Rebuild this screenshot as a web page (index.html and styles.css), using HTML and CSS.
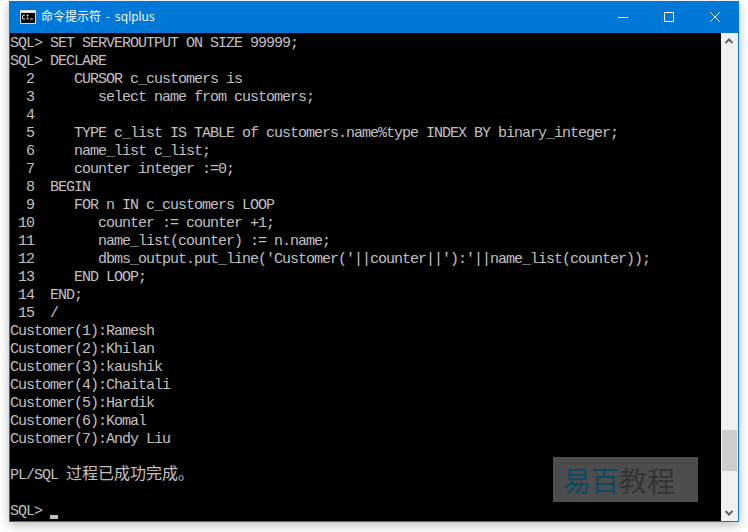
FILE: index.html
```html
<!DOCTYPE html>
<html lang="zh">
<head>
<meta charset="utf-8">
<title>命令提示符 - sqlplus</title>
<link rel="stylesheet" href="styles.css">
</head>
<body>
<div class="window">
  <header class="titlebar">
    <svg class="app-icon" width="16" height="14" viewBox="0 0 16 14">
      <rect x="0" y="0" width="16" height="14" fill="#d8d8d8"/>
      <rect x="1" y="3" width="14" height="10" fill="#000"/>
      <rect x="1" y="1" width="14" height="1" fill="#fff"/>
      <path d="M5 5H3v1.000H2.500v2H3v1h2M7 5h1v1H7zM7 8h1v1H7zM10 9h3" fill="none" stroke="#ddd" stroke-width="1"/>
    </svg>
    <span class="title">命令提示符 - sqlplus</span>
    <div class="controls">
      <span class="ctl"><svg width="10" height="10" viewBox="0 0 10 10"><path d="M0 5.500H10" stroke="#fff" fill="none"/></svg></span>
      <span class="ctl"><svg width="10" height="10" viewBox="0 0 10 10"><rect x=".5" y=".5" width="9" height="9" stroke="#fff" fill="none"/></svg></span>
      <span class="ctl"><svg width="10" height="10" viewBox="0 0 10 10"><path d="M0 0L10 10M10 0L0 10" stroke="#fff" fill="none"/></svg></span>
    </div>
  </header>
  <div class="body">
    <pre class="console">SQL&gt; SET SERVEROUTPUT ON SIZE 99999;
SQL&gt; DECLARE
  2     CURSOR c_customers is
  3        select name from customers;
  4
  5     TYPE c_list IS TABLE of customers.name%type INDEX BY binary_integer;
  6     name_list c_list;
  7     counter integer :=0;
  8  BEGIN
  9     FOR n IN c_customers LOOP
 10        counter := counter +1;
 11        name_list(counter) := n.name;
 12        dbms_output.put_line('Customer('||counter||'):'||name_list(counter));
 13     END LOOP;
 14  END;
 15  /
Customer(1):Ramesh
Customer(2):Khilan
Customer(3):kaushik
Customer(4):Chaitali
Customer(5):Hardik
Customer(6):Komal
Customer(7):Andy Liu

PL/SQL <span class="cjk">过程已成功完成。</span>

SQL&gt; <span class="cursor"></span></pre>
    <div class="watermark"><span class="wm-blue">易百</span>教程</div>
    <aside class="scrollbar">
      <svg width="16" height="17" viewBox="0 0 16 17"><path d="M4.500 10L8 6.500L11.500 10" fill="none" stroke="#606060" stroke-width="2"/></svg>
      <div class="track"><div class="thumb"></div></div>
      <svg width="16" height="17" viewBox="0 0 16 17"><path d="M4.500 7L8 10.500L11.500 7" fill="none" stroke="#606060" stroke-width="2"/></svg>
    </aside>
  </div>
</div>
</body>
</html>
```
FILE: styles.css
```css
html, body {
  margin: 0;
  height: 100%;
  background: #fff;
  overflow: hidden;
}
body {
  padding: 1px 9px 10px;
  box-sizing: border-box;
}
.window {
  width: 730px;
  height: 521px;
  box-sizing: border-box;
  border: 1px solid #0078d7;
  border-top: 0;
  display: flex;
  flex-direction: column;
  box-shadow: 0 3px 10px rgba(0, 0, 0, .28);
}
.titlebar {
  height: 32px;
  flex: none;
  background: #0078d7;
  display: flex;
  align-items: center;
  padding-left: 10px;
  color: #fff;
}
.app-icon { flex: none; margin-right: 5px; }
.title {
  font: 12px/16px "Open Sans", "Noto Sans CJK SC", sans-serif;
  word-spacing: 2px;
}
.controls {
  margin-left: auto;
  display: flex;
}
.ctl {
  width: 46px;
  height: 32px;
  display: flex;
  align-items: center;
  justify-content: center;
}
.body {
  flex: 1;
  min-height: 0;
  position: relative;
  display: flex;
  background: #000;
}
.console {
  flex: 1;
  margin: 0;
  padding-top: 2px;
  font: 15px/18px "Liberation Mono", "Noto Sans CJK SC", monospace;
  letter-spacing: -1px;
  color: #c0c0c0;
  white-space: pre;
  overflow: hidden;
}
.cjk {
  font: 16px/0 "Noto Sans CJK SC", sans-serif;
  letter-spacing: 0;
}
.cursor {
  display: inline-block;
  width: 8px;
  height: 4px;
  background: #c0c0c0;
  vertical-align: -4px;
}
.watermark {
  position: absolute;
  left: 543px;
  top: 424px;
  width: 145px;
  height: 45px;
  box-sizing: border-box;
  padding-left: 10px;
  background: #4d4d4d;
  color: #333;
  font: 28px/46px "Noto Sans CJK SC", sans-serif;
}
.wm-blue { color: #0b4a63; }
.scrollbar {
  width: 17px;
  flex: none;
  background: #f0f0f0;
  display: flex;
  flex-direction: column;
}
.track {
  flex: 1;
  display: flex;
  flex-direction: column;
  justify-content: flex-end;
  padding-bottom: 33px;
}
.thumb {
  height: 41px;
  width: 15px;
  background: #cdcdcd;
  margin-left: 1px;
}
```
